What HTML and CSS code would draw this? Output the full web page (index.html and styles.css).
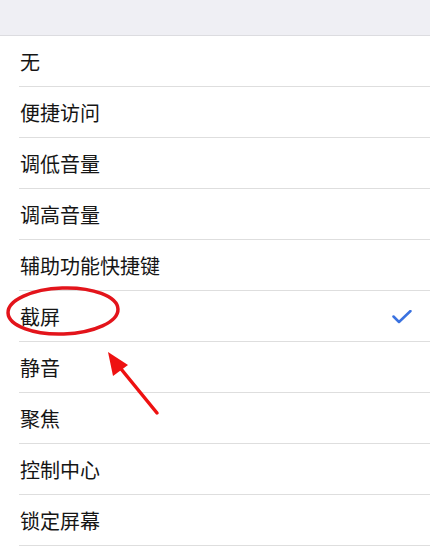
FILE: index.html
```html
<!DOCTYPE html>
<html lang="zh-CN">
<head>
  <meta charset="UTF-8">
  <meta name="viewport" content="width=device-width, initial-scale=1.0">
  <title>截屏</title>
  <link rel="stylesheet" href="styles.css">
</head>
<body>
  <div class="page">
    <div class="header"></div>
    <ul class="options">
      <li>无</li>
      <li>便捷访问</li>
      <li>调低音量</li>
      <li>调高音量</li>
      <li>辅助功能快捷键</li>
      <li class="checked">截屏
        <svg class="check" width="20" height="14" viewBox="0 0 20 14">
          <polyline points="1.5,6.5 7,12 18.5,1" fill="none" stroke="#3a72e0" stroke-width="2.5" stroke-linecap="round" stroke-linejoin="round"/>
        </svg>
      </li>
      <li>静音</li>
      <li>聚焦</li>
      <li>控制中心</li>
      <li>锁定屏幕</li>
    </ul>

    <!-- red annotation drawn over the list -->
    <svg class="markup" width="430" height="548" viewBox="0 0 430 548">
      <ellipse cx="63" cy="311" rx="55" ry="23" fill="none" stroke="#e3141b" stroke-width="3.5" transform="rotate(-2 63 311)"/>
      <line x1="157" y1="413" x2="117" y2="364" stroke="#ee1111" stroke-width="3.5" stroke-linecap="round"/>
      <polygon points="108,352 128,365 113,376" fill="#ee1111"/>
    </svg>
  </div>
</body>
</html>
```

FILE: styles.css
```css
body {
  margin: 0;
  background: #fff;
  font-family: "Noto Sans CJK SC", "Noto Sans", sans-serif;
}
.page {
  position: relative;
  width: 430px;
  height: 548px;
  overflow: hidden;
}
.header {
  height: 35px;
  background: #efeff4;
  border-bottom: 1px solid #dcdce0;
}
.options {
  margin: 0;
  padding: 0 0 0 19px;
  list-style: none;
}
.options > li {
  display: flex;
  align-items: center;
  justify-content: space-between;
  height: 50px;
  padding: 0 18px 0 1px;
  border-bottom: 1px solid #dedede;
  font-size: 20px;
  color: #151515;
}
.options .check {
  margin-top: 2px;
}
.markup {
  position: absolute;
  left: 0;
  top: 0;
  pointer-events: none;
}
```
